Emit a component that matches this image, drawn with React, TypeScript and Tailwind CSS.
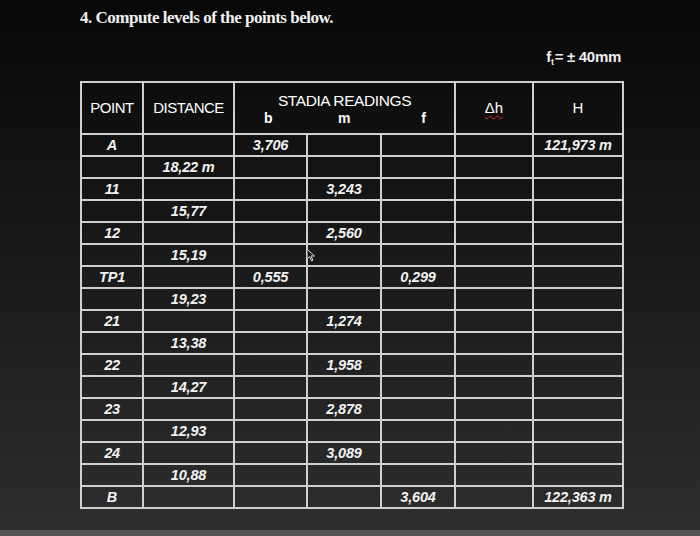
import React from 'react'

type Row = { point?: string; dist?: string; b?: string; m?: string; f?: string; h?: string }

const rows: Row[] = [
  { point: 'A', b: '3,706', h: '121,973 m' },
  { dist: '18,22 m' },
  { point: '11', m: '3,243' },
  { dist: '15,77' },
  { point: '12', m: '2,560' },
  { dist: '15,19' },
  { point: 'TP1', b: '0,555', f: '0,299' },
  { dist: '19,23' },
  { point: '21', m: '1,274' },
  { dist: '13,38' },
  { point: '22', m: '1,958' },
  { dist: '14,27' },
  { point: '23', m: '2,878' },
  { dist: '12,93' },
  { point: '24', m: '3,089' },
  { dist: '10,88' },
  { point: 'B', f: '3,604', h: '122,363 m' },
]

const cell = 'border-2 border-[#cfcfcf] h-[22px] p-0 text-center align-middle leading-[14px]'
const val = 'font-bold italic text-[14.5px] leading-[14px] tracking-[-0.2px] text-[#f2f2f2]'

export default function App() {
  return (
    <div className="relative w-[700px] h-[536px] overflow-hidden bg-linear-to-b from-[#080808] via-[#1a1a1a] to-[#2e2e2e] font-['Liberation_Sans',Arial,sans-serif] text-white">
      {/* Question */}
      <div className="pl-[80px] pt-[7px] font-['Liberation_Serif','Times_New_Roman',serif] font-bold text-[17px] leading-[22px] tracking-[-0.5px] text-[#f0f0f0]">
        4. Compute levels of the points below.
      </div>

      {/* Tolerance */}
      <div className="pr-[79px] mt-[18px] h-[20px] text-right text-[15px] leading-[20px] font-bold tracking-[-0.3px] text-[#f0f0f0]">
        f<span className="relative top-[3px] text-[9px]">t</span>
        <span className="ml-[1px]">= ± 40mm</span>
      </div>

      {/* Table */}
      <div className="pl-[80px] mt-[14px]">
        <table className="border-collapse table-fixed w-[542px]">
          <colgroup>
            <col className="w-[62px]" />
            <col className="w-[91px]" />
            <col className="w-[73px]" />
            <col className="w-[74px]" />
            <col className="w-[74px]" />
            <col className="w-[78px]" />
            <col className="w-[90px]" />
          </colgroup>
          <thead>
            <tr>
              <th className="border-2 border-[#cfcfcf] h-[52px] p-0 font-normal text-[15px] leading-[16px] tracking-[-0.5px]">POINT</th>
              <th className="border-2 border-[#cfcfcf] h-[52px] p-0 font-normal text-[15px] leading-[16px] tracking-[-0.5px]">DISTANCE</th>
              <th colSpan={3} className="border-2 border-[#cfcfcf] h-[52px] p-0 font-normal">
                <div className="text-[15.5px] leading-[18px] tracking-[-0.4px] pt-[2px]">STADIA READINGS</div>
                <div className="grid grid-cols-3 text-[14px] font-bold leading-[16px]">
                  <span className="text-left pl-[29px]">b</span>
                  <span className="text-left pl-[30px]">m</span>
                  <span className="text-right pr-[28px]">f</span>
                </div>
              </th>
              <th className="border-2 border-[#cfcfcf] h-[52px] p-0 font-normal text-[15px] leading-[16px]">
                <span className="underline decoration-wavy decoration-[#d03030] decoration-1 underline-offset-2">Δh</span>
              </th>
              <th className="border-2 border-[#cfcfcf] h-[52px] p-0 font-normal text-[15px] leading-[16px]">H</th>
            </tr>
          </thead>
          <tbody>
            {rows.map((r, i) => (
              <tr key={i}>
                <td className={cell}><span className={val}>{r.point}</span></td>
                <td className={cell}><span className={val}>{r.dist}</span></td>
                <td className={cell}><span className={val}>{r.b}</span></td>
                <td className={cell}><span className={val}>{r.m}</span></td>
                <td className={cell}><span className={val}>{r.f}</span></td>
                <td className={cell}></td>
                <td className={cell}><span className={val}>{r.h}</span></td>
              </tr>
            ))}
          </tbody>
        </table>
      </div>

      {/* Mouse pointer */}
      <svg className="absolute left-[306px] top-[248px]" width="11" height="14" viewBox="0 0 11 14">
        <path d="M1 1 L1 11 L3.5 8.5 L5.5 13 L7 12.3 L5 8 L8.5 8 Z" fill="#1a1a1a" stroke="#d8d8d8" strokeWidth="1" />
      </svg>

      {/* Bottom edge of screen */}
      <div className="absolute left-0 right-0 bottom-0 h-[6px] bg-[#555555]" />
    </div>
  )
}
